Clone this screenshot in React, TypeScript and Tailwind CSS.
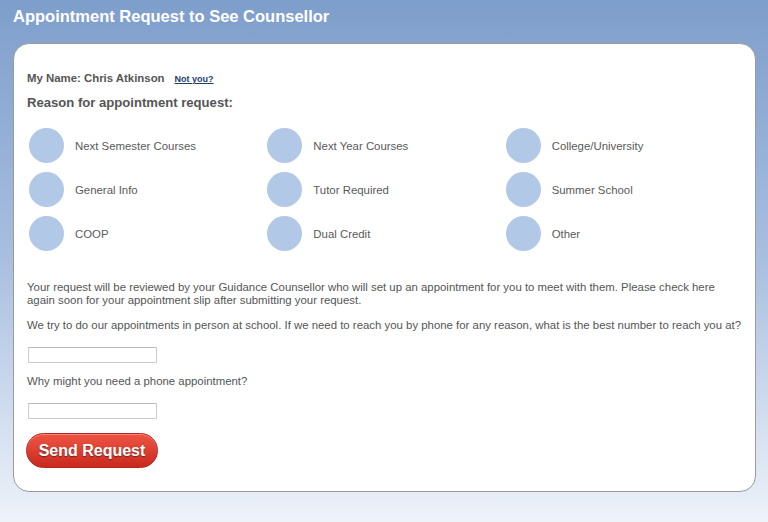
import { useState } from 'react';

const reasons = [
  'Next Semester Courses',
  'Next Year Courses',
  'College/University',
  'General Info',
  'Tutor Required',
  'Summer School',
  'COOP',
  'Dual Credit',
  'Other',
];

export default function App() {
  const [reason, setReason] = useState<string | null>(null);
  const [phone, setPhone] = useState('');
  const [why, setWhy] = useState('');

  return (
    <main
      className="min-h-[522px] bg-gradient-to-b from-[#7e9ecb] via-[#a9bfdf] to-[#eef2f9] pb-[30px]"
      style={{ fontFamily: '"Liberation Sans", Arial, Helvetica, sans-serif' }}
    >
      {/* Header */}
      <h1 className="pt-[7px] pl-[13px] text-[16.5px] leading-[18px] font-bold text-white">
        Appointment Request to See Counsellor
      </h1>

      {/* Card */}
      <div className="mt-[18px] ml-[13px] mr-[12px] h-[449px] rounded-[16px] border border-[#9a9a9a] bg-white pl-[13px] pr-[11px] pt-[28px] text-[#555]">
        <div className="flex items-baseline gap-[10px] text-[11.4px] leading-[12px] font-bold">
          <span>My Name: Chris Atkinson</span>
          <a href="#" className="text-[9px] text-[#243d6c] underline">
            Not you?
          </a>
        </div>

        <h2 className="mt-[10px] text-[13.1px] leading-[16px] font-bold">Reason for appointment request:</h2>

        {/* Reasons */}
        <div className="mt-[17px] grid grid-cols-3 gap-y-[9px] pl-[2px]">
          {reasons.map((r) => (
            <button
              key={r}
              type="button"
              onClick={() => setReason(r)}
              className="flex items-center gap-[11px] text-left text-[11.4px] text-[#5a5a5a]"
            >
              <span
                className={`h-[35px] w-[35px] shrink-0 rounded-full ${
                  reason === r ? 'bg-[#5b84c4]' : 'bg-[#b2c8e7]'
                }`}
              />
              <span className="pt-[2px]">{r}</span>
            </button>
          ))}
        </div>

        <p className="mt-[30px] text-[11.4px] leading-[13px]">
          Your request will be reviewed by your Guidance Counsellor who will set up an appointment for you to meet with
          them. Please check here again soon for your appointment slip after submitting your request.
        </p>
        <p className="mt-[12px] text-[11.4px] leading-[13px]">
          We try to do our appointments in person at school. If we need to reach you by phone for any reason, what is
          the best number to reach you at?
        </p>

        <input
          type="text"
          value={phone}
          onChange={(e) => setPhone(e.target.value)}
          className="mt-[15px] ml-[1px] block h-[16px] w-[129px] border border-[#cdcdcd] border-t-[#b9b9b9] text-[11px] outline-none"
        />

        <p className="mt-[12px] text-[11.4px] leading-[13px]">Why might you need a phone appointment?</p>

        <input
          type="text"
          value={why}
          onChange={(e) => setWhy(e.target.value)}
          className="mt-[15px] ml-[1px] block h-[16px] w-[129px] border border-[#cdcdcd] border-t-[#b9b9b9] text-[11px] outline-none"
        />

        <button
          type="button"
          className="mt-[14px] -ml-[1px] h-[35px] w-[132px] rounded-full border border-[#b9271c] bg-gradient-to-b from-[#ee5444] to-[#c9281d] text-[16px] font-bold text-white shadow-[inset_0_1px_0_rgba(255,255,255,0.3)] [text-shadow:0_1px_1px_rgba(0,0,0,0.45)]"
        >
          Send Request
        </button>
      </div>
    </main>
  );
}
